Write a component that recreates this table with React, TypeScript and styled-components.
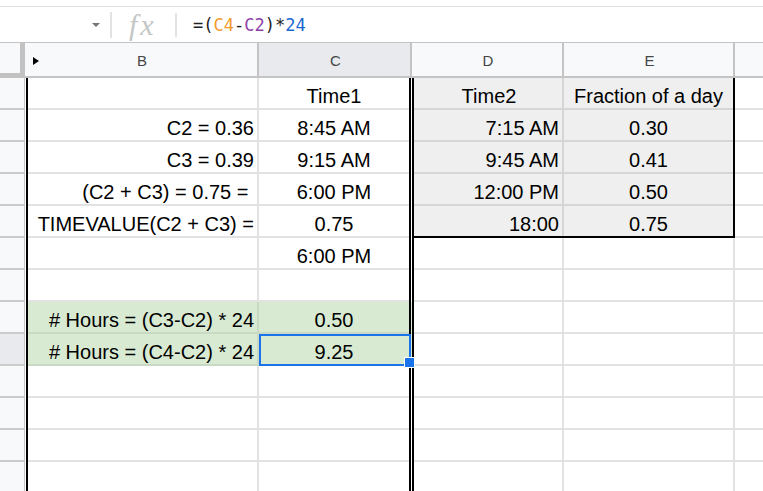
import React from 'react';
import styled, { createGlobalStyle } from 'styled-components';

const GlobalStyle = createGlobalStyle`
  html, body { margin: 0; padding: 0; background: #fff; }
  body { font-family: "Liberation Sans", Arial, sans-serif; overflow: hidden; }
`;

const Page = styled.div`
  width: 763px;
  height: 491px;
  overflow: hidden;
  padding-top: 6px;
  box-sizing: border-box;
  background: #fff;
`;

/* ---------- formula bar ---------- */
const FormulaBar = styled.div`
  display: flex;
  align-items: center;
  height: 35px;
  border-top: 1px solid #e1e3e6;
`;

const NameBox = styled.div`
  flex: none;
  width: 110px;
  display: flex;
  justify-content: flex-end;
  padding-right: 10px;
  box-sizing: border-box;
`;

const DropArrow = styled.span`
  width: 0;
  height: 0;
  border-left: 4px solid transparent;
  border-right: 4px solid transparent;
  border-top: 4px solid #757575;
`;

const Divider = styled.div<{ $h: number; $ml: number }>`
  flex: none;
  width: 2px;
  height: ${(p) => p.$h}px;
  margin-left: ${(p) => p.$ml}px;
  background: #e3e3e3;
`;

const FxLabel = styled.span`
  flex: none;
  width: 27px;
  margin-left: 17px;
  font-family: "Liberation Serif", "DejaVu Serif", serif;
  font-style: italic;
  font-size: 30px;
  line-height: 1;
  letter-spacing: 3px;
  color: #c4c7c5;
`;

const Formula = styled.div`
  margin-left: 16px;
  font-family: "DejaVu Sans Mono", "Liberation Mono", monospace;
  font-size: 17px;
  color: #202124;
  white-space: pre;
`;

const Tok = styled.span<{ $c: string }>`
  color: ${(p) => p.$c};
`;

/* ---------- sheet ---------- */
const Sheet = styled.div`
  display: flex;
  flex-direction: column;
`;

const HeaderRow = styled.div`
  display: flex;
  height: 35px;
  border-top: 1px solid #c4c4c4;
  white-space: nowrap;
`;

const Corner = styled.div`
  flex: none;
  width: 25px;
  height: 35px;
  box-sizing: border-box;
  background: #f8f9fa;
  border-right: 5px solid #c2c2c2;
  border-bottom: 5px solid #c2c2c2;
`;

const ColHeader = styled.div<{ $w: number; $selected?: boolean }>`
  flex: none;
  width: ${(p) => p.$w}px;
  height: 35px;
  box-sizing: border-box;
  display: grid;
  grid-template-columns: 1fr auto 1fr;
  align-items: center;
  background: ${(p) => (p.$selected ? '#e8eaed' : '#f8f9fa')};
  box-shadow: inset -2px 0 0 #c4c4c4, inset 0 -2px 0 #c4c4c4;
  color: #444746;
  font-size: 15px;
`;

const ColLabel = styled.span`
  grid-column: 2;
`;

const HiddenArrow = styled.span`
  grid-column: 1;
  grid-row: 1;
  justify-self: start;
  margin-left: 8px;
  width: 0;
  height: 0;
  border-top: 4px solid transparent;
  border-bottom: 4px solid transparent;
  border-left: 6px solid #000;
`;

const Row = styled.div`
  display: flex;
  height: 32px;
  white-space: pre;
`;

const RowHeader = styled.div<{ $selected?: boolean }>`
  flex: none;
  width: 25px;
  margin-right: 1px;
  box-sizing: border-box;
  border-right: 1px solid #c4c4c4;
  background: ${(p) => (p.$selected ? '#e8eaed' : '#f8f9fa')};
  box-shadow: inset 0 -2px 0 #cbcbcb;
`;

type Edge = 'grid' | 'black' | 'double';
type Align = 'left' | 'center' | 'right';

const justify = { left: 'flex-start', center: 'center', right: 'flex-end' };

const Cell = styled.div<{
  $w: number;
  $align: Align;
  $bg: string;
  $line: string;
  $left?: boolean;
  $right: Edge;
  $bottom: 'grid' | 'black';
  $selected?: boolean;
}>`
  flex: none;
  width: ${(p) => p.$w}px;
  height: 32px;
  box-sizing: border-box;
  display: flex;
  align-items: flex-end;
  justify-content: ${(p) => justify[p.$align]};
  padding: 0 5px ${(p) => (p.$bottom === 'black' ? 0 : 2)}px 5px;
  font-size: 20px;
  line-height: 23px;
  color: #000;
  background: ${(p) => p.$bg};
  border-left: ${(p) => (p.$left ? '2px solid #000' : 'none')};
  border-right: ${(p) =>
    p.$right === 'black' ? '2px solid #000' : p.$right === 'double' ? '5px double #000' : 'none'};
  border-bottom: ${(p) => (p.$bottom === 'black' ? '2px solid #000' : 'none')};
  box-shadow: ${(p) =>
    [
      p.$right === 'grid' ? `inset -2px 0 0 ${p.$line}` : '',
      p.$bottom === 'grid' ? `inset 0 -2px 0 ${p.$line}` : '',
    ]
      .filter(Boolean)
      .join(', ') || 'none'};
  ${(p) => (p.$selected ? 'position: relative; z-index: 1;' : '')}
`;

const SelectionFrame = styled.div`
  position: absolute;
  left: 0;
  top: 0;
  right: -2px;
  bottom: 0;
  border: 2px solid #1a73e8;
  pointer-events: none;
`;

const FillHandle = styled.div`
  position: absolute;
  right: -6px;
  bottom: -4px;
  width: 9px;
  height: 9px;
  background: #1a73e8;
  border: 1px solid #fff;
`;

/* ---------- data ---------- */
const WHITE = '#ffffff';
const GREEN = '#d9ead3';
const GRAY = '#efefef';
const LINE = '#e2e2e2';
const LINE_GREEN = '#c9d9c3';
const LINE_GRAY = '#d6d6d6';

type RowSpec = {
  b?: string;
  c?: string;
  d?: string;
  e?: string;
  dAlign?: Align;
  green?: boolean;
  table?: boolean;
  tableEnd?: boolean;
  selected?: boolean;
};

const ROWS: RowSpec[] = [
  { c: 'Time1', d: 'Time2', dAlign: 'center', e: 'Fraction of a day', table: true },
  { b: 'C2 = 0.36', c: '8:45 AM', d: '7:15 AM', e: '0.30', table: true },
  { b: 'C3 = 0.39', c: '9:15 AM', d: '9:45 AM', e: '0.41', table: true },
  { b: '(C2 + C3) = 0.75 = ', c: '6:00 PM', d: '12:00 PM', e: '0.50', table: true },
  { b: 'TIMEVALUE(C2 + C3) =', c: '0.75', d: '18:00', e: '0.75', table: true, tableEnd: true },
  { c: '6:00 PM' },
  {},
  { b: '# Hours = (C3-C2) * 24', c: '0.50', green: true },
  { b: '# Hours = (C4-C2) * 24', c: '9.25', green: true, selected: true },
  {},
  {},
  {},
  {},
];

const HEADERS = [
  { label: 'B', w: 234, arrow: true },
  { label: 'C', w: 153, selected: true },
  { label: 'D', w: 152 },
  { label: 'E', w: 171 },
  { label: '', w: 120 },
];

export default function App() {
  return (
    <>
      <GlobalStyle />
      <Page>
        <FormulaBar>
          <NameBox>
            <DropArrow />
          </NameBox>
          <Divider $h={26} $ml={0} />
          <FxLabel>fx</FxLabel>
          <Divider $h={24} $ml={19} />
          <Formula>
            =(<Tok $c="#f29b2b">C4</Tok>-<Tok $c="#8e3fa8">C2</Tok>)*<Tok $c="#1967d2">24</Tok>
          </Formula>
        </FormulaBar>
        <Sheet>
          <HeaderRow>
            <Corner />
            {HEADERS.map((h, i) => (
              <ColHeader key={i} $w={h.w} $selected={h.selected}>
                {h.arrow && <HiddenArrow />}
                <ColLabel>{h.label}</ColLabel>
              </ColHeader>
            ))}
          </HeaderRow>
          {ROWS.map((r, i) => {
            const bcBg = r.green ? GREEN : WHITE;
            const bcLine = r.green ? LINE_GREEN : LINE;
            const deBg = r.table ? GRAY : WHITE;
            const deLine = r.table ? LINE_GRAY : LINE;
            const deBottom = r.tableEnd ? 'black' : 'grid';
            return (
              <Row key={i}>
                <RowHeader $selected={r.selected} />
                <Cell $w={233} $align="right" $bg={bcBg} $line={bcLine} $left $right="grid" $bottom="grid">
                  {r.b}
                </Cell>
                <Cell
                  $w={155}
                  $align="center"
                  $bg={bcBg}
                  $line={bcLine}
                  $right="double"
                  $bottom="grid"
                  $selected={r.selected}
                >
                  {r.c}
                  {r.selected && (
                    <SelectionFrame>
                      <FillHandle />
                    </SelectionFrame>
                  )}
                </Cell>
                <Cell
                  $w={150}
                  $align={r.dAlign ?? 'right'}
                  $bg={deBg}
                  $line={deLine}
                  $right="grid"
                  $bottom={deBottom}
                >
                  {r.d}
                </Cell>
                <Cell
                  $w={171}
                  $align="center"
                  $bg={deBg}
                  $line={deLine}
                  $right={r.table ? 'black' : 'grid'}
                  $bottom={deBottom}
                >
                  {r.e}
                </Cell>
                <Cell $w={120} $align="right" $bg={WHITE} $line={LINE} $right="grid" $bottom="grid" />
              </Row>
            );
          })}
        </Sheet>
      </Page>
    </>
  );
}
